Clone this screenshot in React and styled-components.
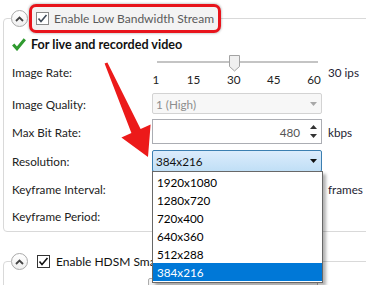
import React from 'react'
import styled, { createGlobalStyle } from 'styled-components'

const GlobalStyle = createGlobalStyle`
  html, body {
    margin: 0;
    padding: 0;
    background: #fff;
  }
  body {
    font-family: Lato, 'Noto Sans', sans-serif;
  }
`

const Screen = styled.div`
  position: relative;
  width: 366px;
  height: 285px;
  overflow: hidden;
  background: #fff;
  color: #222;
  font-size: 11.7px;
`

const GroupBox = styled.fieldset`
  margin: ${p => p.$top || 0}px 0 0 3px;
  padding: 0 0 ${p => p.$bottom || 0}px;
  width: 420px;
  box-sizing: border-box;
  border: 1px solid #d9d9d9;
  border-radius: 4px;
`

const Legend = styled.legend`
  display: flex;
  align-items: center;
  margin-left: 7px;
  padding: 0;
`

const CollapseButton = styled.span`
  display: flex;
  align-items: center;
  justify-content: center;
  width: 17px;
  height: 17px;
  box-sizing: border-box;
  border: 1px solid #a9a9a9;
  border-radius: 50%;
  background: linear-gradient(#fff, #efefef);
`

const Highlight = styled.span`
  display: flex;
  align-items: center;
  gap: 5px;
  height: 29px;
  margin-left: 1px;
  padding: 0 4px;
  box-sizing: border-box;
  border: 3px solid #e8141c;
  border-radius: 7px;
  background: #f3f3f3;
  box-shadow: 0 0 2px 1px rgba(0, 0, 0, 0.18);
`

const HeaderText = styled.span`
  font-size: 12px;
  color: ${p => p.$muted ? '#5a5a5a' : '#111'};
  margin-left: ${p => p.$gap || 0}px;
  white-space: nowrap;
`

const Notice = styled.div`
  display: flex;
  align-items: center;
  gap: 5px;
  height: 16px;
  margin: 3px 0 0 8px;
  font-size: 12.6px;
  font-weight: 700;
  color: #111;
`

const Row = styled.div`
  display: grid;
  grid-template-columns: ${p => p.$label || 134}px 170px auto;
  column-gap: 6px;
  align-items: center;
  height: ${p => p.$h}px;
  margin-top: ${p => p.$mt}px;
  padding-left: 8px;
`

const Label = styled.span`
  white-space: nowrap;
`

const Unit = styled.span`
  color: #1d1d33;
  white-space: nowrap;
`

const Slider = styled.div`
  position: relative;
  height: 36px;
`

const Track = styled.div`
  height: 2px;
  margin: 7px 4px 0 5px;
  background: #c4c4c4;
`

const Thumb = styled.svg`
  position: absolute;
  top: 1px;
  margin-left: -5px;
`

const Tick = styled.span`
  position: absolute;
  top: 18px;
  transform: translateX(-50%);
`

const Combo = styled.div`
  position: relative;
  display: flex;
  align-items: center;
  justify-content: space-between;
  height: ${p => p.$h || 21}px;
  padding: 0 4px 0 3px;
  box-sizing: border-box;
  border: 1px solid ${p => p.$active ? '#3c7fb1' : p.$disabled ? '#d3d3d3' : '#acacac'};
  border-radius: 2px;
  background: ${p => p.$active
    ? 'linear-gradient(#dcecfc, #c0dff6)'
    : p.$disabled ? '#f7f7f7' : 'linear-gradient(#f3f3f3, #e5e5e5)'};
  color: ${p => p.$disabled ? '#8d8d8d' : '#111'};
`

const SpinBox = styled.div`
  display: flex;
  align-items: center;
  justify-content: flex-end;
  height: 25px;
  padding-right: 4px;
  box-sizing: border-box;
  border: 1px solid #abadb3;
  background: #fff;
  color: #555;
`

const Spinner = styled.span`
  display: flex;
  flex-direction: column;
  gap: 5px;
  margin-left: 10px;
`

const ListBox = styled.ul`
  position: absolute;
  top: 100%;
  left: -1px;
  z-index: 2;
  width: 171px;
  margin: 0;
  padding: 1px 0;
  box-sizing: border-box;
  list-style: none;
  border: 1px solid #686868;
  background: #fff;
  box-shadow: 3px 3px 3px rgba(0, 0, 0, 0.3);
`

const ListItem = styled.li`
  height: 18px;
  line-height: 18px;
  padding-left: 4px;
  background: ${p => p.$selected ? '#0078d7' : 'transparent'};
  color: ${p => p.$selected ? '#fff' : '#000'};
`

const Overlay = styled.svg`
  position: absolute;
  left: 0;
  top: 0;
  z-index: 3;
  pointer-events: none;
`

const Chevron = () => (
  <svg width='9' height='6' viewBox='0 0 9 6'>
    <polyline points='1,5 4.5,1.5 8,5' fill='none' stroke='#444' strokeWidth='1.8' />
  </svg>
)

const CheckBox = ({ dark, gap }) => (
  <svg width='13' height='13' viewBox='0 0 13 13' style={{ marginLeft: gap || 0, flex: 'none' }}>
    <rect x='0.5' y='0.5' width='12' height='12' fill='#fff' stroke={dark ? '#333' : '#8a8a8a'} />
    <polyline points='2.5,6.5 5,9.5 10.5,3' fill='none' stroke={dark ? '#111' : '#3f4a58'} strokeWidth='1.6' />
  </svg>
)

const GreenCheck = () => (
  <svg width='14' height='13' viewBox='0 0 14 13' style={{ flex: 'none' }}>
    <polyline points='1.2,6.5 5,10.8 12.8,1.2' fill='none' stroke='#2f9a2f' strokeWidth='3' />
  </svg>
)

const Arrow = ({ up, color }) => (
  <svg width='7' height='4' viewBox='0 0 7 4'>
    <polygon points={up ? '0,4 7,4 3.5,0' : '0,0 7,0 3.5,4'} fill={color} />
  </svg>
)

const ticks = [1, 15, 30, 45, 60]
const resolutions = ['1920x1080', '1280x720', '720x400', '640x360', '512x288', '384x216']

const RateSlider = ({ value }) => {
  const pct = v => 5 + (v - 1) / 59 * 158
  return (
    <Slider>
      <Track />
      <Thumb width='11' height='17' viewBox='0 0 11 17' style={{ left: pct(value) - 1 }}>
        <polygon points='0.5,0.5 10.5,0.5 10.5,11.5 5.5,16 0.5,11.5' fill='#f0f0f0' stroke='#a3a3a3' />
      </Thumb>
      {ticks.map(t => <Tick key={t} style={{ left: pct(t) - 1 }}>{t}</Tick>)}
    </Slider>
  )
}

const App = () => (
  <Screen>
    <GlobalStyle />
    <GroupBox $top={4} $bottom={4}>
      <Legend>
        <CollapseButton><Chevron /></CollapseButton>
        <Highlight>
          <CheckBox />
          <HeaderText $muted>Enable Low Bandwidth Stream</HeaderText>
        </Highlight>
      </Legend>
      <Notice>
        <GreenCheck />
        For live and recorded video
      </Notice>
      <Row $h={36} $mt={2}>
        <Label>Image Rate:</Label>
        <RateSlider value={30} />
        <Unit>30 ips</Unit>
      </Row>
      <Row $h={21} $mt={3}>
        <Label>Image Quality:</Label>
        <Combo $disabled>
          1 (High)
          <Arrow color='#a8a8a8' />
        </Combo>
      </Row>
      <Row $h={25} $mt={5}>
        <Label>Max Bit Rate:</Label>
        <SpinBox>
          480
          <Spinner>
            <Arrow up color='#333' />
            <Arrow color='#333' />
          </Spinner>
        </SpinBox>
        <Unit>kbps</Unit>
      </Row>
      <Row $h={22} $mt={6}>
        <Label>Resolution:</Label>
        <Combo $h={22} $active>
          384x216
          <Arrow color='#111' />
          <ListBox>
            {resolutions.map(r => (
              <ListItem key={r} $selected={r === '384x216'}>{r}</ListItem>
            ))}
          </ListBox>
        </Combo>
      </Row>
      <Row $h={22} $mt={6}>
        <Label>Keyframe Interval:</Label>
        <span />
        <Unit>frames</Unit>
      </Row>
      <Row $h={22} $mt={5}>
        <Label>Keyframe Period:</Label>
      </Row>
    </GroupBox>
    <GroupBox $top={21}>
      <Legend>
        <CollapseButton><Chevron /></CollapseButton>
        <CheckBox dark gap={9} />
        <HeaderText $gap={6}>Enable HDSM SmartCodec</HeaderText>
      </Legend>
      <Row $h={21} $mt={8} $label={130}>
        <Label>Bandwidth Reduction:</Label>
        <Combo>
          Medium
          <Arrow color='#111' />
        </Combo>
      </Row>
    </GroupBox>
    <Overlay width='366' height='285' viewBox='0 0 366 285'>
      <polygon
        points='104.6,63.6 107.4,62.4 140.6,129 150.6,124.5 148,157 121.4,137.5 131.4,133'
        fill='#ec1a1a'
      />
    </Overlay>
  </Screen>
)

export default App
